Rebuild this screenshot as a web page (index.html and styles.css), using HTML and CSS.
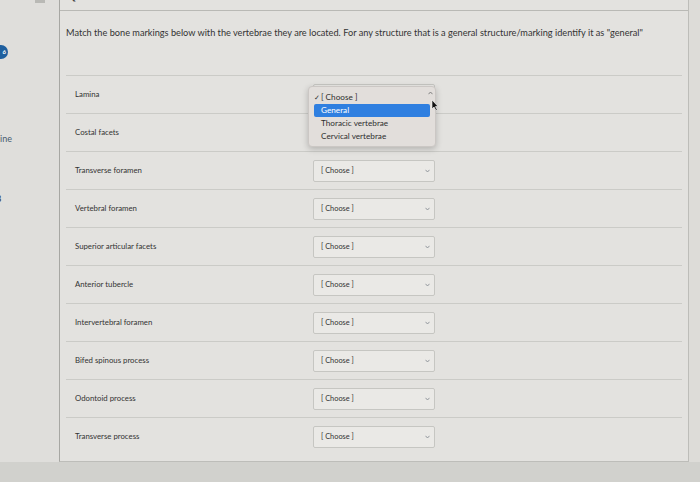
FILE: index.html
```html
<!DOCTYPE html>
<html>
<head>
<meta charset="utf-8">
<link rel="stylesheet" href="styles.css">
</head>
<body>
<div class="screen">
  <aside class="side">
    <div class="side-top"></div>
    <div class="badge">6</div>
    <div class="side-link">ine</div>
    <div class="side-mark">8</div>
  </aside>
  <main class="panel">
    <header class="qhead"><span class="qtitle">Question 2</span></header>
    <section class="qbody">
      <p class="prompt">Match the bone markings below with the vertebrae they are located. For any structure that is a general structure/marking identify it as "general"</p>
      <div class="rows">
        <div class="row open">
          <span class="label">Lamina</span>
          <div class="select"><span>[ Choose ]</span><svg class="chev" width="5" height="4" viewBox="0 0 5 4"><path d="M0.5 0.8 L2.5 3 L4.5 0.8" fill="none" stroke="#8a8f96" stroke-width="0.9"/></svg></div>
          <div class="menu">
            <div class="item checked"><span class="tick">&#10003;</span>[ Choose ]</div>
            <div class="item active">General</div>
            <div class="item">Thoracic vertebrae</div>
            <div class="item">Cervical vertebrae</div>
            <svg class="caret" width="5" height="4" viewBox="0 0 5 4"><path d="M0.5 3.2 L2.5 1 L4.5 3.2" fill="none" stroke="#777" stroke-width="0.9"/></svg>
            <svg class="cursor" width="8" height="11" viewBox="0 0 8 11"><path d="M1 0 L1 9 L3 7 L5 10.5 L6.3 9.8 L4.4 6.6 L7 6.4 Z" fill="#111" stroke="#fff" stroke-width="0.6"/></svg>
          </div>
        </div>
        <div class="row">
          <span class="label">Costal facets</span>
          <div class="select"><span>[ Choose ]</span><svg class="chev" width="5" height="4" viewBox="0 0 5 4"><path d="M0.5 0.8 L2.5 3 L4.5 0.8" fill="none" stroke="#8a8f96" stroke-width="0.9"/></svg></div>
        </div>
        <div class="row">
          <span class="label">Transverse foramen</span>
          <div class="select"><span>[ Choose ]</span><svg class="chev" width="5" height="4" viewBox="0 0 5 4"><path d="M0.5 0.8 L2.5 3 L4.5 0.8" fill="none" stroke="#8a8f96" stroke-width="0.9"/></svg></div>
        </div>
        <div class="row">
          <span class="label">Vertebral foramen</span>
          <div class="select"><span>[ Choose ]</span><svg class="chev" width="5" height="4" viewBox="0 0 5 4"><path d="M0.5 0.8 L2.5 3 L4.5 0.8" fill="none" stroke="#8a8f96" stroke-width="0.9"/></svg></div>
        </div>
        <div class="row">
          <span class="label">Superior articular facets</span>
          <div class="select"><span>[ Choose ]</span><svg class="chev" width="5" height="4" viewBox="0 0 5 4"><path d="M0.5 0.8 L2.5 3 L4.5 0.8" fill="none" stroke="#8a8f96" stroke-width="0.9"/></svg></div>
        </div>
        <div class="row">
          <span class="label">Anterior tubercle</span>
          <div class="select"><span>[ Choose ]</span><svg class="chev" width="5" height="4" viewBox="0 0 5 4"><path d="M0.5 0.8 L2.5 3 L4.5 0.8" fill="none" stroke="#8a8f96" stroke-width="0.9"/></svg></div>
        </div>
        <div class="row">
          <span class="label">Intervertebral foramen</span>
          <div class="select"><span>[ Choose ]</span><svg class="chev" width="5" height="4" viewBox="0 0 5 4"><path d="M0.5 0.8 L2.5 3 L4.5 0.8" fill="none" stroke="#8a8f96" stroke-width="0.9"/></svg></div>
        </div>
        <div class="row">
          <span class="label">Bifed spinous process</span>
          <div class="select"><span>[ Choose ]</span><svg class="chev" width="5" height="4" viewBox="0 0 5 4"><path d="M0.5 0.8 L2.5 3 L4.5 0.8" fill="none" stroke="#8a8f96" stroke-width="0.9"/></svg></div>
        </div>
        <div class="row">
          <span class="label">Odontoid process</span>
          <div class="select"><span>[ Choose ]</span><svg class="chev" width="5" height="4" viewBox="0 0 5 4"><path d="M0.5 0.8 L2.5 3 L4.5 0.8" fill="none" stroke="#8a8f96" stroke-width="0.9"/></svg></div>
        </div>
        <div class="row">
          <span class="label">Transverse process</span>
          <div class="select"><span>[ Choose ]</span><svg class="chev" width="5" height="4" viewBox="0 0 5 4"><path d="M0.5 0.8 L2.5 3 L4.5 0.8" fill="none" stroke="#8a8f96" stroke-width="0.9"/></svg></div>
        </div>
      </div>
    </section>
  </main>
  <div class="edge"></div>
</div>
<div class="floor"></div>
</body>
</html>
```

FILE: styles.css
```css
* { box-sizing: border-box; }
html, body { margin: 0; padding: 0; }
body {
  width: 700px;
  height: 482px;
  overflow: hidden;
  background: #d3d3cf;
  font-family: Lato, "Open Sans", sans-serif;
  color: #3a3a3a;
}
.screen {
  display: grid;
  grid-template-columns: 59px 630px 11px;
  height: 462px;
  background: #dfdedb;
}
.side {
  display: flex;
  flex-direction: column;
  overflow: hidden;
}
.side-top {
  width: 10px;
  height: 3px;
  margin-left: 35px;
  background: #b9b9b5;
}
.badge {
  width: 14px;
  height: 14px;
  margin-top: 42px;
  margin-left: -6px;
  border-radius: 50%;
  background: #1f5f9e;
  color: #fff;
  font-size: 6px;
  font-weight: 700;
  line-height: 14px;
  text-align: right;
  padding-right: 2px;
}
.side-link {
  margin-top: 74px;
  font-size: 9px;
  color: #485b70;
  line-height: 12px;
}
.side-mark {
  margin-top: 48px;
  margin-left: -4px;
  font-size: 9px;
  font-weight: 700;
  color: #444;
  line-height: 12px;
}
.panel {
  display: flex;
  flex-direction: column;
  background: #e3e2df;
  border-left: 1px solid #a7a7a3;
  border-right: 1px solid #bdbdb9;
  border-bottom: 1px solid #bdbdb9;
}
.qhead {
  height: 11px;
  border-bottom: 1px solid #b9b9b5;
  display: flex;
  align-items: flex-start;
}
.qtitle {
  margin-left: 6px;
  margin-top: -10px;
  font-size: 12px;
  font-weight: 700;
  color: #444;
  line-height: 12px;
}
.qbody {
  padding: 16px 6px 0 6px;
}
.prompt {
  margin: 0;
  font-size: 9.2px;
  line-height: 12px;
  color: #333;
}
.rows {
  margin-top: 36px;
}
.row {
  position: relative;
  display: grid;
  grid-template-columns: 247px 122px;
  align-items: center;
  height: 38px;
  border-top: 1px solid #cbcbc7;
}
.row.open { z-index: 2; }
.label {
  padding-left: 9px;
  font-size: 7.8px;
  color: #333;
  margin-top: -2px;
}
.select {
  height: 22px;
  display: flex;
  align-items: center;
  justify-content: space-between;
  padding: 0 4px 0 7px;
  background: #eae9e6;
  border: 1px solid #c6c6c2;
  border-radius: 2px;
  font-size: 7.4px;
  color: #333;
}
.menu {
  position: absolute;
  left: 242px;
  top: 10px;
  width: 128px;
  height: 61px;
  padding: 4px 5px;
  background: #e2dedb;
  border: 1px solid #cbc7c4;
  border-radius: 4px;
  box-shadow: 0 2px 6px rgba(0,0,0,0.22);
}
.item {
  height: 13px;
  line-height: 13px;
  padding-left: 7px;
  font-size: 8.2px;
  color: #2e2e2e;
  border-radius: 2px;
}
.item.checked { padding-left: 0; }
.tick { display: inline-block; width: 7px; font-size: 7px; }
.item.active {
  background: #2f7fe0;
  color: #fff;
}
.caret {
  position: absolute;
  right: 2px;
  top: 4px;
}
.cursor {
  position: absolute;
  right: -4px;
  top: 13px;
}
.edge {
  background: #dddcd8;
}
.floor {
  height: 20px;
  background: #d1d1cd;
}
```
